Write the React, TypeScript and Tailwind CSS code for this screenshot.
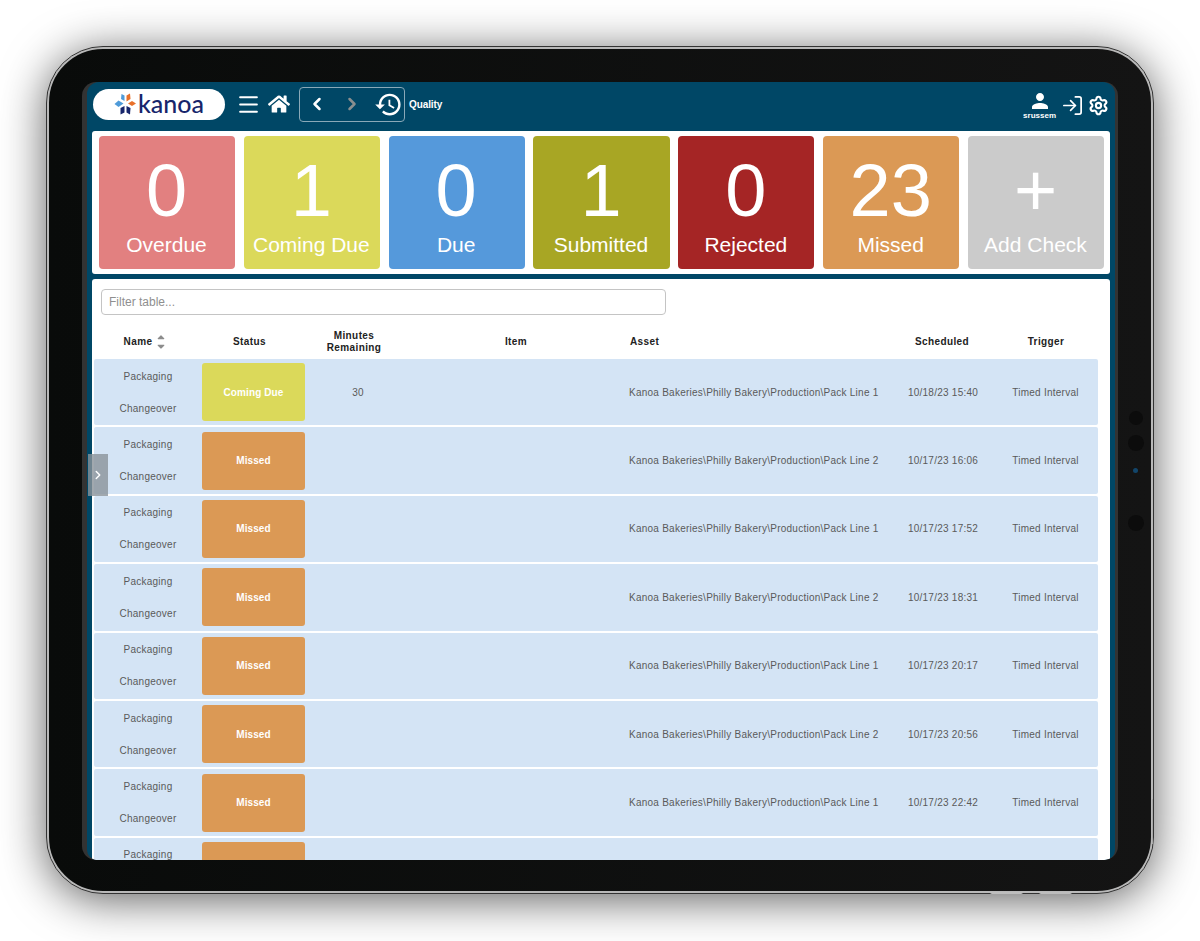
import { ChevronLeft, ChevronRight, LogIn, Menu, Settings } from 'lucide-react';
import { FaHome, FaSortDown, FaSortUp } from 'react-icons/fa';
import { MdHistory, MdPerson } from 'react-icons/md';

const cards = [
  { value: '0', label: 'Overdue', color: 'bg-[#e28080]' },
  { value: '1', label: 'Coming Due', color: 'bg-[#dbd95a]' },
  { value: '0', label: 'Due', color: 'bg-[#5599db]' },
  { value: '1', label: 'Submitted', color: 'bg-[#a8a624]' },
  { value: '0', label: 'Rejected', color: 'bg-[#a52525]' },
  { value: '23', label: 'Missed', color: 'bg-[#db9955]' },
  { value: '+', label: 'Add Check', color: 'bg-[#cbcbcb]' },
];

const rows = [
  { status: 'Coming Due', mins: '30', line: '1', time: '10/18/23 15:40' },
  { status: 'Missed', mins: '', line: '2', time: '10/17/23 16:06' },
  { status: 'Missed', mins: '', line: '1', time: '10/17/23 17:52' },
  { status: 'Missed', mins: '', line: '2', time: '10/17/23 18:31' },
  { status: 'Missed', mins: '', line: '1', time: '10/17/23 20:17' },
  { status: 'Missed', mins: '', line: '2', time: '10/17/23 20:56' },
  { status: 'Missed', mins: '', line: '1', time: '10/17/23 22:42' },
];

function KanoaMark() {
  return (
    <svg width="23" height="22" viewBox="0 0 23 22">
      <path d="M7.5 1 L10.5 2.5 L10.5 8 L7 6 Z" fill="#4f9bd9" />
      <path d="M12.5 2.5 L16 0.5 L16.5 6 L12.5 8.5 Z" fill="#e8702a" />
      <path d="M0.5 11 L4.5 7.5 L9.5 10.5 L4.5 14 Z" fill="#4f9bd9" />
      <path d="M14 10.5 L18 8 L22 10.5 L18 13 Z" fill="#e8702a" />
      <path d="M6.5 15 L10.5 13 L10.5 19.5 L6.5 21.5 Z" fill="#17256b" />
      <path d="M12.5 13 L16.5 15 L16 21.5 L12.5 19.5 Z" fill="#17256b" />
    </svg>
  );
}

export default function App() {
  return (
    <div className="w-[1200px] h-[941px] bg-white pl-[47px] pt-[47px] overflow-hidden font-['Liberation_Sans',Arial,sans-serif]">
      {/* Tablet */}
      <div className="relative w-[1106px] h-[846px] rounded-[56px] border-2 border-[#b9b9b9] outline outline-1 outline-[#333] bg-gradient-to-r from-[#090b0a] to-[#141414] pt-[33px] pl-[33px] pr-[33px] pb-[31px] shadow-[0_6px_46px_rgba(0,0,0,0.65)]">
        <span className="absolute left-[1080px] top-[362px] w-[14px] h-[14px] rounded-full bg-[#0c0c0c]" />
        <span className="absolute left-[1079px] top-[386px] w-[16px] h-[16px] rounded-full bg-[#0c0c0c]" />
        <span className="absolute left-[1084px] top-[419px] w-[5px] h-[5px] rounded-full bg-[#12456a]" />
        <span className="absolute left-[1079px] top-[466px] w-[16px] h-[16px] rounded-full bg-[#0c0c0c]" />
        {/* Hardware buttons */}
        <span className="absolute left-[941px] top-[843px] w-[33px] h-[2px] rounded-b-[2px] bg-[#bdbdbd]" />
        <span className="absolute left-[990px] top-[843px] w-[33px] h-[2px] rounded-b-[2px] bg-[#bdbdbd]" />
        <span className="absolute left-[1103px] top-[750px] w-[1px] h-[45px] bg-[#a8a8a8]" />

        {/* Screen */}
        <div className="h-full rounded-[14px] bg-[#333] pl-[5px] pr-[3px] overflow-hidden">
          <div className="relative h-full flex flex-col bg-[#004766] rounded-t-[12px] rounded-b-[10px] overflow-hidden">
            {/* Top bar */}
            <div className="h-[49px] shrink-0 flex items-center pl-[6px] pr-[6px] text-white">
              <div className="w-[132px] h-[31px] rounded-full bg-white flex items-center justify-center gap-[1px] -mt-[5px]">
                <KanoaMark />
                <span className="font-['Lato',sans-serif] font-medium text-[25px] leading-none text-[#17256b] -mt-[2px]">kanoa</span>
              </div>
              <Menu className="ml-[11px] -mt-[5px]" size={25} strokeWidth={2} />
              <FaHome className="ml-[7px] -mt-[5px]" size={22} />
              <div className="ml-[9px] -mt-[5px] w-[106px] h-[35px] rounded-[4px] border border-[#8aa9b8] flex items-center justify-between pl-[7px] pr-[1px]">
                <ChevronLeft size={20} strokeWidth={3} />
                <ChevronRight size={20} strokeWidth={3} className="text-[#8a8f8f] ml-[3px]" />
                <MdHistory size={29} />
              </div>
              <span className="ml-[4px] -mt-[5px] text-[10px] font-bold tracking-[-0.1px]">Quality</span>
              <div className="ml-auto flex items-center -mt-[3px]">
                <div className="flex flex-col items-center mt-[1px]">
                  <MdPerson size={24} className="-my-[2px]" />
                  <span className="text-[8px] font-bold leading-[10px]">srussem</span>
                </div>
                <LogIn className="ml-[5px]" size={23} strokeWidth={1.8} />
                <Settings className="ml-[4px]" size={21} strokeWidth={2.4} />
              </div>
            </div>

            {/* Check cards */}
            <div className="h-[143px] shrink-0 mx-[5px] bg-white rounded-[3px] p-[5px_6px_5px_7px] grid grid-cols-7 gap-[8.8px]">
              {cards.map((c) => (
                <div key={c.label} className={`${c.color} rounded-[4px] flex flex-col items-center text-white`}>
                  <div className="text-[74px] leading-[78px] mt-[16px] -ml-[1px]">{c.value}</div>
                  <div className="text-[21px] leading-[24px] mt-[3px] -ml-[1px]">{c.label}</div>
                </div>
              ))}
            </div>

            {/* Table */}
            <div className="flex-1 min-h-0 mx-[5px] mt-[5px] bg-white rounded-t-[3px] overflow-hidden pl-[2px] pr-[12px]">
              <div className="pt-[10px] pl-[7px]">
                <input
                  className="w-[565px] h-[26px] rounded-[4px] border border-[#c4c4c4] px-[7px] text-[12px] outline-none placeholder:text-[#8f8f8f]"
                  placeholder="Filter table..."
                />
              </div>
              <div className="mt-[10px] h-[34px] pb-[1px] grid grid-cols-[102px_107px_102px_222px_262px_106px_102px] items-center text-[10px] font-bold tracking-[0.4px] text-[#222] text-center">
                <div className="flex items-center justify-center gap-[3px] pl-[1px]">
                  Name
                  <span className="relative w-[12px] h-[14px] text-[#8c8c8c]">
                    <FaSortUp className="absolute left-0 top-[-1px]" size={12} />
                    <FaSortDown className="absolute left-0 top-[3px]" size={12} />
                  </span>
                </div>
                <div>Status</div>
                <div className="leading-[12px]">Minutes<br />Remaining</div>
                <div>Item</div>
                <div className="text-left pl-[3px]">Asset</div>
                <div>Scheduled</div>
                <div>Trigger</div>
              </div>
              {rows.map((r, i) => (
                <div key={i} className="h-[66.4px] mb-[2px] bg-[#d4e4f5] rounded-[2px] grid grid-cols-[108px_103px_106px_208px_271px_106px_102px] items-center text-[10px] tracking-[0.25px] text-[#5a5a5a] text-center">
                  <div className="leading-[32px] pt-[1px]">Packaging<br />Changeover</div>
                  <div className={`${r.status === 'Missed' ? 'bg-[#db9955]' : 'bg-[#dbd95a]'} h-[58px] rounded-[3px] flex items-center justify-center text-white font-bold tracking-[0.1px]`}>
                    {r.status}
                  </div>
                  <div>{r.mins}</div>
                  <div />
                  <div className="text-left pl-[10px] whitespace-nowrap">{`Kanoa Bakeries\\Philly Bakery\\Production\\Pack Line ${r.line}`}</div>
                  <div>{r.time}</div>
                  <div className="pr-[3px]">Timed Interval</div>
                </div>
              ))}
              {/* Last row is cut by the bottom of the screen */}
              <div className="h-[66.4px] bg-[#d4e4f5] rounded-[2px] grid grid-cols-[108px_103px] items-start text-[10px] tracking-[0.25px] text-[#5a5a5a] text-center">
                <div className="mt-[11px] leading-[12px]">Packaging</div>
                <div className="mt-[4px] bg-[#db9955] h-[58px] rounded-[3px]" />
              </div>
            </div>

            {/* Side drawer handle */}
            <div className="absolute left-[1px] top-[372px] w-[20px] h-[42px] bg-[#8a929a]/80 flex items-center justify-end text-white">
              <ChevronRight size={14} strokeWidth={2.5} className="mr-[3px]" />
            </div>
          </div>
        </div>
      </div>
    </div>
  );
}
